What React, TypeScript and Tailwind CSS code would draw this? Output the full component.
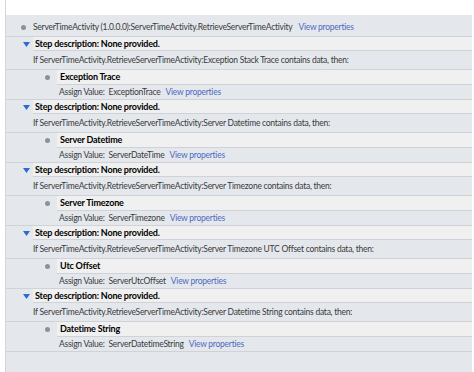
const groups = [
  { cond: "Exception Stack Trace", name: "Exception Trace", value: "ExceptionTrace" },
  { cond: "Server Datetime", name: "Server Datetime", value: "ServerDateTime" },
  { cond: "Server Timezone", name: "Server Timezone", value: "ServerTimezone" },
  { cond: "Server Timezone UTC Offset", name: "Utc Offset", value: "ServerUtcOffset" },
  { cond: "Server Datetime String", name: "Datetime String", value: "ServerDatetimeString" },
];

function Bullet() {
  return <span className="block w-[5px] h-[5px] rounded-full bg-[#8c9198]" />;
}

function Triangle() {
  return (
    <svg width="7" height="5" viewBox="0 0 7 5" className="block">
      <path d="M0 0 L7 0 L3.5 5 Z" fill="#2e6bd1" />
    </svg>
  );
}

export default function App() {
  return (
    <div className="w-[474px] h-[372px] bg-white overflow-hidden font-['Lato',sans-serif] text-[8.5px] tracking-[-0.25px] text-[#3a3a3a]">
      <div className="ml-[5px] h-full border-l border-[#d3d6db] flex flex-col">
        <div className="h-[15px] bg-white shrink-0" />
        <div className="flex-1 bg-[#e4e8ed] mr-[2px]">
          {/* activity row */}
          <div className="flex items-center h-[22px] pt-[4px] pl-[15px] border-b border-[#cfd3d8]">
            <Bullet />
            <span className="ml-[7px] whitespace-nowrap">
              ServerTimeActivity (1.0.0.0):ServerTimeActivity.RetrieveServerTimeActivity
            </span>
            <span className="ml-[6px] text-[#5068c0] whitespace-nowrap">View properties</span>
          </div>

          {groups.map((g) => (
            <div key={g.name}>
              {/* step header */}
              <div className="flex h-[14px]">
                <div className="w-[27px] flex items-center justify-end pr-[3px]">
                  <Triangle />
                </div>
                <div className="flex-1 bg-[#f0f0f0] border-b border-[#cfd3d8] flex items-center pl-[2px] text-[9px] tracking-[-0.2px] font-bold text-black whitespace-nowrap">
                  Step description: None provided.
                </div>
              </div>
              {/* condition */}
              <div className="flex items-center h-[19px] pl-[27px] border-b border-[#cfd3d8] whitespace-nowrap">
                If ServerTimeActivity.RetrieveServerTimeActivity:{g.cond} contains data, then:
              </div>
              {/* assigned field */}
              <div className="flex h-[15px]">
                <div className="w-[51px] flex items-center justify-end pr-[7px]">
                  <Bullet />
                </div>
                <div className="flex-1 bg-[#f0f0f0] border-b border-[#cfd3d8] flex items-center pl-[3px] text-[9px] tracking-[-0.2px] font-bold text-black whitespace-nowrap">
                  {g.name}
                </div>
              </div>
              <div className="flex items-center h-[15px] pl-[53px] border-b border-[#cfd3d8] whitespace-nowrap">
                <span>Assign Value:&nbsp; {g.value}</span>
                <span className="ml-[5px] text-[#5068c0]">View properties</span>
              </div>
            </div>
          ))}
        </div>
      </div>
    </div>
  );
}
